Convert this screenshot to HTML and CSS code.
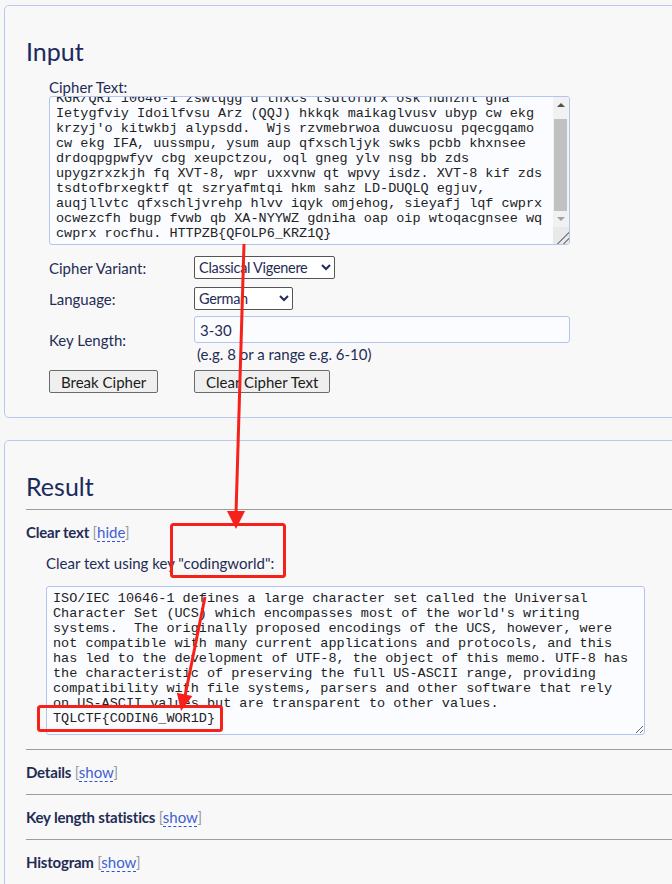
FILE: index.html
```html
<!DOCTYPE html>
<html lang="en">
<head>
    <meta charset="UTF-8">
    <meta name="viewport" content="width=device-width, initial-scale=1.0">
    <title>Vigenere Cipher Breaker</title>
    <link rel="stylesheet" href="styles.css">
</head>
<body>
    <div class="panel">
        <h2>Input</h2>
        <div class="form">
            <label class="label-top" for="ciphertext">Cipher Text:</label>
            <div class="cipher-box">
                <textarea id="ciphertext" class="cipher" spellcheck="false">KGR/QRI 10646-1 zswtqgg d thxcs tsdtofbrx osk hdnzhl gna
Ietygfviy Idoilfvsu Arz (QQJ) hkkqk maikaglvusv ubyp cw ekg
krzyj'o kitwkbj alypsdd.  Wjs rzvmebrwoa duwcuosu pqecgqamo
cw ekg IFA, uussmpu, ysum aup qfxschljyk swks pcbb khxnsee
drdoqpgpwfyv cbg xeupctzou, oql gneg ylv nsg bb zds
upygzrxzkjh fq XVT-8, wpr uxxvnw qt wpvy isdz. XVT-8 kif zds
tsdtofbrxegktf qt szryafmtqi hkm sahz LD-DUQLQ egjuv,
auqjllvtc qfxschljvrehp hlvv iqyk omjehog, sieyafj lqf cwprx
ocwezcfh bugp fvwb qb XA-NYYWZ gdniha oap oip wtoqacgnsee wq
cwprx rocfhu. HTTPZB{QFOLP6_KRZ1Q}
</textarea>
                <div class="scrollbar">
                    <div class="sb-btn sb-up"></div>
                    <div class="sb-track"><div class="sb-thumb"></div></div>
                    <div class="sb-btn sb-down"></div>
                    <div class="sb-corner"></div>
                </div>
            </div>
            <div class="row">
                <label for="variant">Cipher Variant:</label>
                <select id="variant" class="variant">
                    <option>Classical Vigenere</option>
                    <option>Beaufort</option>
                </select>
            </div>
            <div class="row row-lang">
                <label for="language">Language:</label>
                <select id="language" class="language">
                    <option>German</option>
                    <option>English</option>
                </select>
            </div>
            <div class="row row-key">
                <label for="keylength">Key Length:</label>
                <div class="key-field">
                    <input type="text" id="keylength" value="3-30">
                    <div class="hint">(e.g. 8 or a range e.g. 6-10)</div>
                </div>
            </div>
            <div class="row row-buttons">
                <div class="button-cell"><button>Break Cipher</button></div>
                <button>Clear Cipher Text</button>
            </div>
        </div>
    </div>

    <div class="panel">
        <h2 class="result-title">Result</h2>
        <div class="section">
            <div class="section-title">Clear text <span class="toggle">[<a href="#">hide</a>]</span></div>
            <div class="section-body">
                <p>Clear text using key "codingworld":</p>
                <textarea class="plain" spellcheck="false">ISO/IEC 10646-1 defines a large character set called the Universal
Character Set (UCS) which encompasses most of the world's writing
systems.  The originally proposed encodings of the UCS, however, were
not compatible with many current applications and protocols, and this
has led to the development of UTF-8, the object of this memo. UTF-8 has
the characteristic of preserving the full US-ASCII range, providing
compatibility with file systems, parsers and other software that rely
on US-ASCII values but are transparent to other values.
TQLCTF{CODIN6_WOR1D}</textarea>
            </div>
        </div>
        <div class="section">
            <div class="section-title">Details <span class="toggle">[<a href="#">show</a>]</span></div>
        </div>
        <div class="section">
            <div class="section-title">Key length statistics <span class="toggle">[<a href="#">show</a>]</span></div>
        </div>
        <div class="section">
            <div class="section-title">Histogram <span class="toggle">[<a href="#">show</a>]</span></div>
        </div>
    </div>

    <svg class="annotations" width="672" height="884" viewBox="0 0 672 884">
        <!-- key found -> clear text -->
        <line x1="244" y1="244" x2="236" y2="514" class="mark-line"/>
        <polygon points="227,511 245,511 236,529" class="mark-head"/>
        <rect x="171.5" y="524.5" width="113" height="52" rx="2" class="mark-box"/>
        <line x1="205" y1="597" x2="185" y2="696" class="mark-line"/>
        <polygon points="192.4,696 176.8,692.7 181,711" class="mark-head"/>
        <rect x="38.5" y="706.5" width="183" height="24" rx="2" class="mark-box"/>
    </svg>

    <script>
        // keep the cipher text scrolled a little, like after pasting
        document.getElementById('ciphertext').scrollTop = 8;
    </script>
</body>
</html>
```

FILE: styles.css
```css
html {
    overflow: hidden;
}
body {
    margin: 0;
    position: relative;
    background: #f7f7f7;
    font-family: Lato, "Noto Sans", sans-serif;
    font-size: 15px;
    color: #1f2c56;
}
.panel {
    margin: 5px -30px 0 4px;
    padding: 30px 21px 24px;
    border: 1px solid #b9c8ee;
    border-radius: 5px;
    background: #f8f8f8;
}
.panel + .panel {
    margin-top: 22px;
}
h2 {
    margin: 0 0 12px;
    font-size: 25px;
    font-weight: normal;
    line-height: 30px;
    color: #1c2a5c;
}
.result-title {
    margin-bottom: 8px;
}
.form {
    margin-left: 23px;
    width: 521px;
}
label {
    display: block;
    line-height: 18px;
}
.row label {
    width: 145px;
    flex: none;
}
textarea {
    display: block;
    box-sizing: border-box;
    height: 149px;
    padding: 2px 6px;
    border: 1px solid #b3c4ef;
    border-radius: 3px;
    background: #fbfcff;
    font-family: "Liberation Mono", "Courier New", monospace;
    font-size: 13.5px;
    line-height: 15px;
    color: #222;
    white-space: pre;
    overflow-x: hidden;
}
.cipher-box {
    display: flex;
    box-sizing: border-box;
    width: 521px;
    height: 149px;
    margin-bottom: 11px;
    border: 1px solid #b3c4ef;
    border-radius: 3px;
    background: #fbfcff;
    overflow: hidden;
}
.cipher {
    flex: 1;
    height: 100%;
    border: none;
    border-radius: 0;
    background: transparent;
    overflow: hidden;
    resize: none;
}
.scrollbar {
    display: flex;
    flex-direction: column;
    width: 16px;
    background: #f1f1f1;
}
.sb-btn {
    display: flex;
    align-items: center;
    justify-content: center;
    height: 16px;
}
.sb-up::before,
.sb-down::before {
    content: "";
    border-left: 4px solid transparent;
    border-right: 4px solid transparent;
}
.sb-up::before {
    border-bottom: 4px solid #505050;
}
.sb-down::before {
    border-top: 4px solid #a3a3a3;
}
.sb-track {
    flex: 1;
    display: flex;
    flex-direction: column;
    justify-content: flex-end;
    padding: 0 2px 0 1px;
}
.sb-thumb {
    height: 92px;
    background: #c1c1c1;
}
.sb-corner {
    height: 17px;
    background:
        linear-gradient(135deg, transparent 62%, #8a8a8a 62%, #8a8a8a 68%, transparent 68%, transparent 80%, #8a8a8a 80%, #8a8a8a 86%, transparent 86%),
        #e9e9e9;
}
.plain {
    width: 599px;
    padding-top: 4px;
    overflow-y: hidden;
}
.row {
    display: flex;
    align-items: center;
}
.row-lang {
    margin-top: 8px;
}
.row-key {
    margin-top: 6px;
}
.row-buttons {
    margin-top: 7px;
}
select {
    box-sizing: border-box;
    height: 23px;
    padding: 0;
    border: 1px solid #555;
    border-radius: 2px;
    background: #fff;
    font-family: Lato, "Noto Sans", sans-serif;
    font-size: 14.5px;
    letter-spacing: -0.3px;
    color: #1f2c56;
}
.variant {
    width: 141px;
}
.language {
    width: 99px;
}
input {
    box-sizing: border-box;
    width: 376px;
    height: 27px;
    padding: 0 5px;
    border: 1px solid #b3c4ef;
    border-radius: 3px;
    background: #fbfcff;
    font-family: Lato, "Noto Sans", sans-serif;
    font-size: 15px;
    color: #1f2c56;
}
.hint {
    margin-top: 2px;
    padding-left: 3px;
    line-height: 18px;
}
.button-cell {
    width: 145px;
}
button {
    box-sizing: border-box;
    height: 23px;
    padding: 0 11px;
    border: 1px solid #6b6b6b;
    border-radius: 2px;
    background: #efefef;
    font-family: Lato, "Noto Sans", sans-serif;
    font-size: 15px;
    color: #1b1b1b;
}
.section {
    border-top: 1px solid #9c9c9c;
    margin-right: -20px;
}
.section-title {
    padding: 11px 0;
    line-height: 22px;
    font-weight: bold;
    letter-spacing: -0.2px;
}
.toggle {
    font-weight: normal;
    color: #999;
    letter-spacing: 0;
}
.toggle a {
    color: #3e5fd4;
    text-decoration: none;
    border-bottom: 1px dashed #2a55dd;
}
.section-body {
    margin: 0 0 14px 20px;
}
.section-body p {
    margin: 0 0 14px;
    line-height: 18px;
}
.annotations {
    position: absolute;
    top: 0;
    left: 0;
    pointer-events: none;
}
.mark-line {
    stroke: #f5211a;
    stroke-width: 3;
}
.mark-head {
    fill: #f5211a;
}
.mark-box {
    fill: none;
    stroke: #f5211a;
    stroke-width: 3;
}
```
